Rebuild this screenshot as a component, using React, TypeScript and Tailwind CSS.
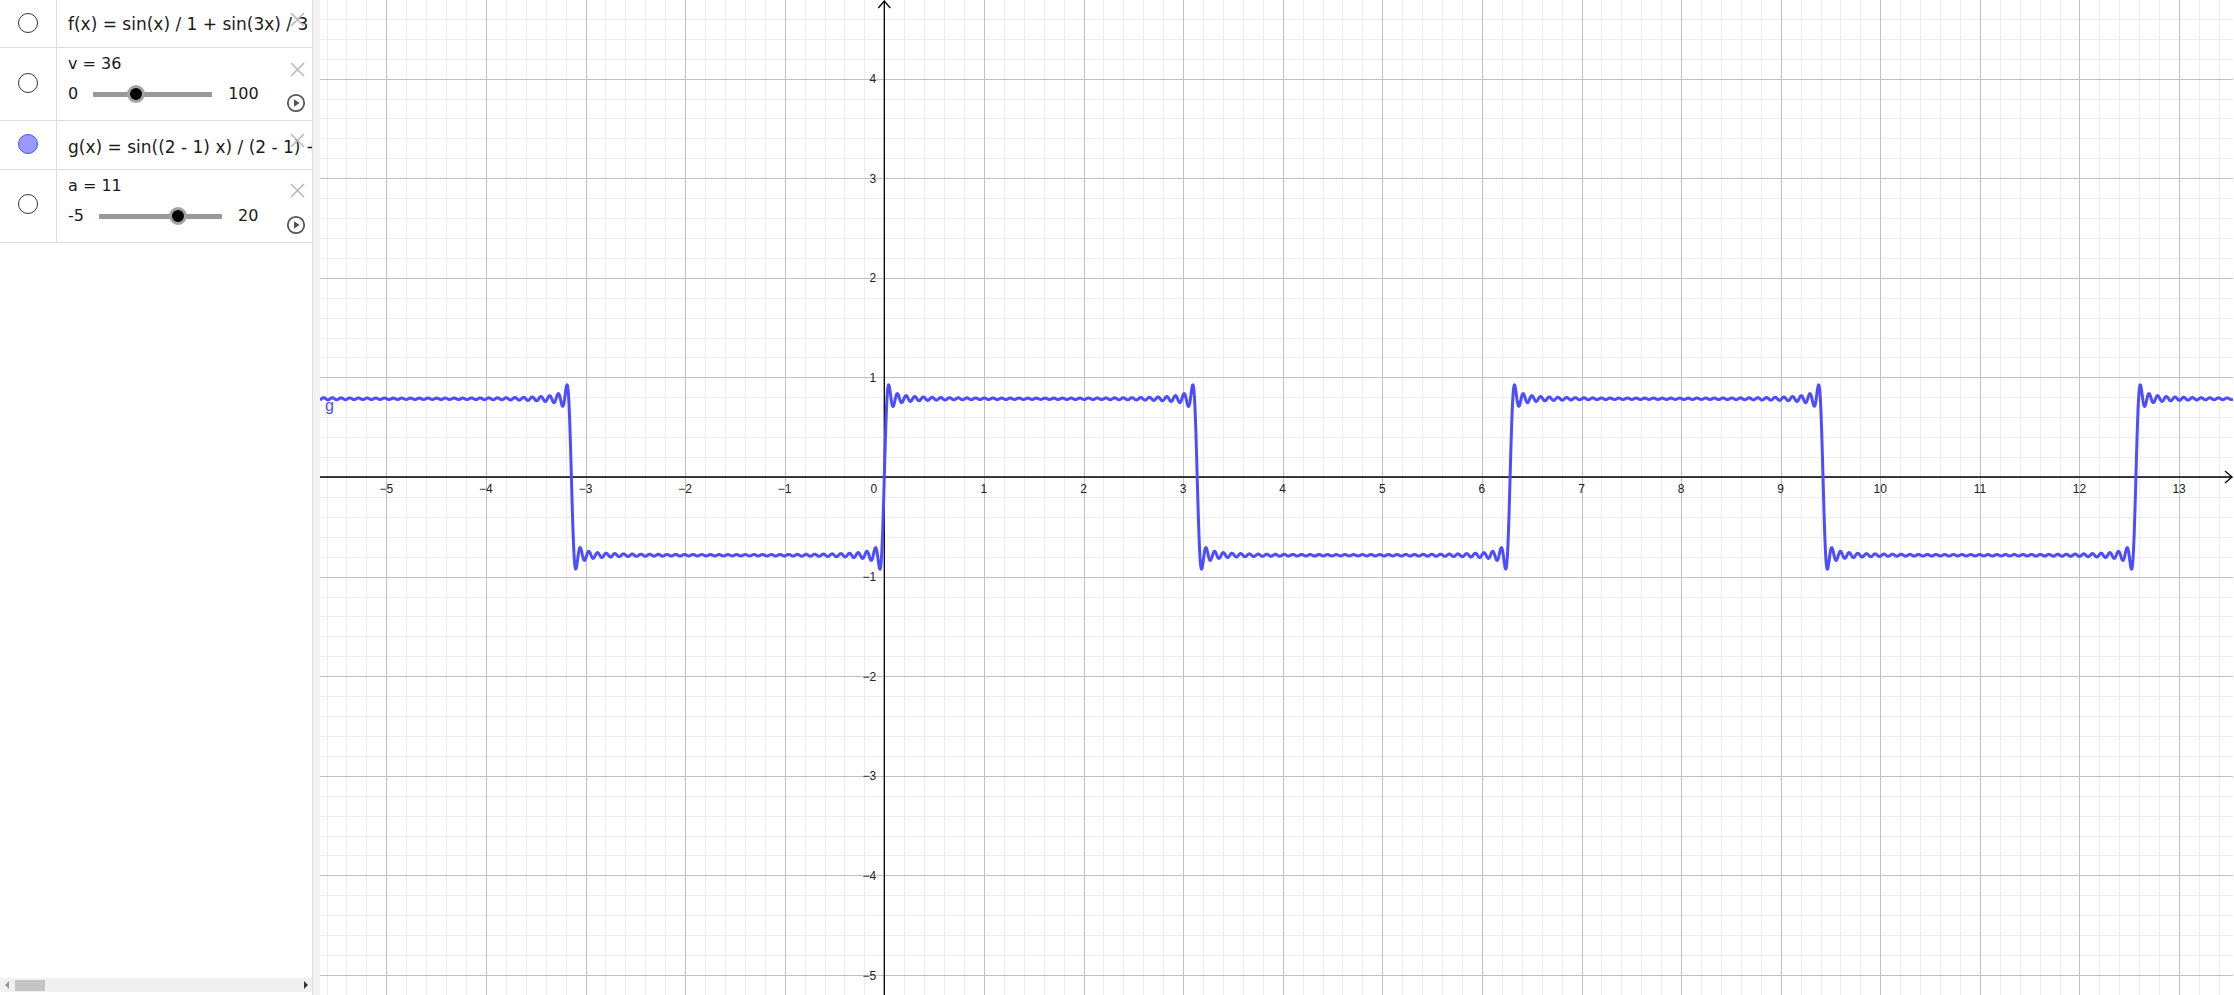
import React from "react";

const W = 1913;
const H = 995;
const OX = 564.3;
const OY = 477;
const U = 99.6;

function g(x: number) {
  let s = 0;
  for (let k = 1; k <= 36; k++) {
    const n = 2 * k - 1;
    s += Math.sin(n * x) / n;
  }
  return s;
}

function buildCurve() {
  const pts: string[] = [];
  for (let px = 0; px <= W; px += 0.5) {
    const x = (px - OX) / U;
    const y = OY - g(x) * U;
    pts.push(`${px.toFixed(1)},${y.toFixed(2)}`);
  }
  return "M" + pts.join("L");
}

const curve = buildCurve();

function Grid() {
  const minor: React.ReactNode[] = [];
  const major: React.ReactNode[] = [];
  const step = U / 5;
  for (let i = -40; i <= 100; i++) {
    const x = Math.round(OX + i * step) + 0.5;
    if (x < 0 || x > W) continue;
    const el = <line key={"v" + i} x1={x} y1={0} x2={x} y2={H} />;
    if (i % 5 === 0) major.push(el);
    else minor.push(el);
  }
  for (let j = -40; j <= 40; j++) {
    const y = Math.round(OY + j * step) + 0.5;
    if (y < 0 || y > H) continue;
    const el = <line key={"h" + j} x1={0} y1={y} x2={W} y2={y} />;
    if (j % 5 === 0) major.push(el);
    else minor.push(el);
  }
  return (
    <>
      <g stroke="#ededed" strokeWidth={1}>{minor}</g>
      <g stroke="#c0c0c0" strokeWidth={1}>{major}</g>
    </>
  );
}

function Labels() {
  const els: React.ReactNode[] = [];
  for (let i = -5; i <= 13; i++) {
    if (i === 0) continue;
    const x = OX + i * U;
    els.push(
      <text key={"x" + i} x={x} y={OY + 16} textAnchor="middle">
        {i < 0 ? "\u2212" + Math.abs(i) : String(i)}
      </text>
    );
  }
  for (let j = -5; j <= 4; j++) {
    if (j === 0) continue;
    const y = OY - j * U;
    els.push(
      <text key={"y" + j} x={OX - 8} y={y + 4.5} textAnchor="end">
        {j < 0 ? "\u2212" + Math.abs(j) : String(j)}
      </text>
    );
  }
  els.push(
    <text key="o" x={OX - 7} y={OY + 16} textAnchor="end">
      0
    </text>
  );
  return (
    <g fill="#222" fontSize={12} fontFamily="'Liberation Sans', Arial, sans-serif">
      {els}
    </g>
  );
}

function Graphics() {
  return (
    <svg width={W} height={H} className="block shrink-0" xmlns="http://www.w3.org/2000/svg">
      <rect width={W} height={H} fill="#ffffff" />
      <Grid />
      <g stroke="#000" strokeWidth={1.3} fill="none">
        <line x1={0} y1={OY} x2={W - 1} y2={OY} />
        <line x1={OX} y1={1} x2={OX} y2={H} />
        <polyline points={`${W - 8},${OY - 6} ${W - 1},${OY} ${W - 8},${OY + 6}`} />
        <polyline points={`${OX - 6},${8} ${OX},${1} ${OX + 6},${8}`} />
      </g>
      <Labels />
      <path d={curve} fill="none" stroke="#4d4dff" strokeWidth={3} strokeLinejoin="round" />
      <text x={5} y={411} fill="#4d4dff" fontSize={16} fontFamily="'Liberation Sans', Arial, sans-serif">
        g
      </text>
    </svg>
  );
}

function XIcon() {
  return (
    <svg width="15" height="15" viewBox="0 0 15 15">
      <path d="M1 1 L14 14 M14 1 L1 14" stroke="#b9b9b9" strokeWidth="1.6" fill="none" />
    </svg>
  );
}

function PlayIcon() {
  return (
    <svg width="20" height="20" viewBox="0 0 20 20">
      <circle cx="10" cy="10" r="8.2" stroke="#555" strokeWidth="1.8" fill="none" />
      <path d="M8 6.2 L13.6 10 L8 13.8 Z" fill="#555" />
    </svg>
  );
}

function Marble({ on }: { on?: boolean }) {
  return on ? (
    <div className="w-[20px] h-[20px] rounded-full bg-[#9999ff] border-[1.5px] border-[#4d4dff]" />
  ) : (
    <div className="w-[20px] h-[20px] rounded-full bg-white border border-[#333]" />
  );
}

function Slider({ min, max, value, trackW, gapL }: { min: string; max: string; value: number; trackW: number; gapL: number }) {
  return (
    <div className="flex items-center h-[20px]">
      <span>{min}</span>
      <div className="relative h-[20px] flex items-center" style={{ width: trackW, marginLeft: gapL }}>
        <div className="w-full h-[5px] bg-[#999999]" />
        <div
          className="absolute top-[1px] w-[18px] h-[18px] -ml-[9px] rounded-full bg-black border-[3px] border-[#a3a3a3]"
          style={{ left: `${value * 100}%` }}
        />
      </div>
      <span className="ml-[16px]">{max}</span>
    </div>
  );
}

function Row({ children, marble, h, xTop, play, on }: { children: React.ReactNode; marble: number; h: number; xTop: number; play?: boolean; on?: boolean }) {
  return (
    <div className="relative flex border-b border-[#dcdcdc] overflow-hidden" style={{ height: h }}>
      <div className="w-[57px] shrink-0 border-r border-[#dcdcdc] relative">
        <div className="absolute left-[18px]" style={{ top: marble - 10 }}>
          <Marble on={on} />
        </div>
      </div>
      <div className="flex-1 min-w-0 pl-[11px] whitespace-nowrap overflow-hidden">{children}</div>
      <div className="absolute right-[7px]" style={{ top: xTop }}>
        <XIcon />
      </div>
      {play && (
        <div className="absolute right-[6px] top-[45px]">
          <PlayIcon />
        </div>
      )}
    </div>
  );
}

export default function App() {
  return (
    <div
      className="flex w-[2234px] h-[995px] bg-white text-[#1a1a1a] overflow-hidden"
      style={{ fontFamily: "'DejaVu Sans', 'Liberation Sans', sans-serif" }}
    >
      <div className="w-[313px] shrink-0 h-full flex flex-col border-r border-[#dcdcdc] bg-white">
        <div className="text-[16px]">
          <Row marble={23} h={48} xTop={12}>
            <div className="h-[47px] flex items-center pt-[2px] text-[17px]">f(x) = sin(x) / 1 + sin(3x) / 3 + sin(5x) / 5</div>
          </Row>
          <Row marble={35} h={73} xTop={14} play>
            <div className="pt-[6px] leading-[20px]">v = 36</div>
            <div className="mt-[10px]">
              <Slider min="0" max="100" value={0.36} trackW={119} gapL={15} />
            </div>
          </Row>
          <Row marble={23} h={49} xTop={12} on>
            <div className="h-[48px] flex items-center pt-[5px] text-[17px]">g(x) = sin((2 - 1) x) / (2 - 1) + sin((4 - 1) x)</div>
          </Row>
          <Row marble={34} h={73} xTop={13} play>
            <div className="pt-[6px] leading-[20px]">a = 11</div>
            <div className="mt-[10px]">
              <Slider min="-5" max="20" value={0.64} trackW={123} gapL={15} />
            </div>
          </Row>
        </div>
        <div className="flex-1" />
        <div className="h-[14px] mb-[3px] bg-[#f0f0f0] flex items-center relative">
          <div className="ml-[5px] w-0 h-0 border-y-[4px] border-y-transparent border-r-[4px] border-r-[#999]" />
          <div className="ml-[6px] w-[30px] h-[11px] bg-[#c4c4c4]" />
          <div className="absolute right-[4px] w-0 h-0 border-y-[4px] border-y-transparent border-l-[4px] border-l-[#333]" />
        </div>
      </div>
      <div className="w-[7px] shrink-0 h-full bg-[#f3f3f3]" />
      <Graphics />
    </div>
  );
}
